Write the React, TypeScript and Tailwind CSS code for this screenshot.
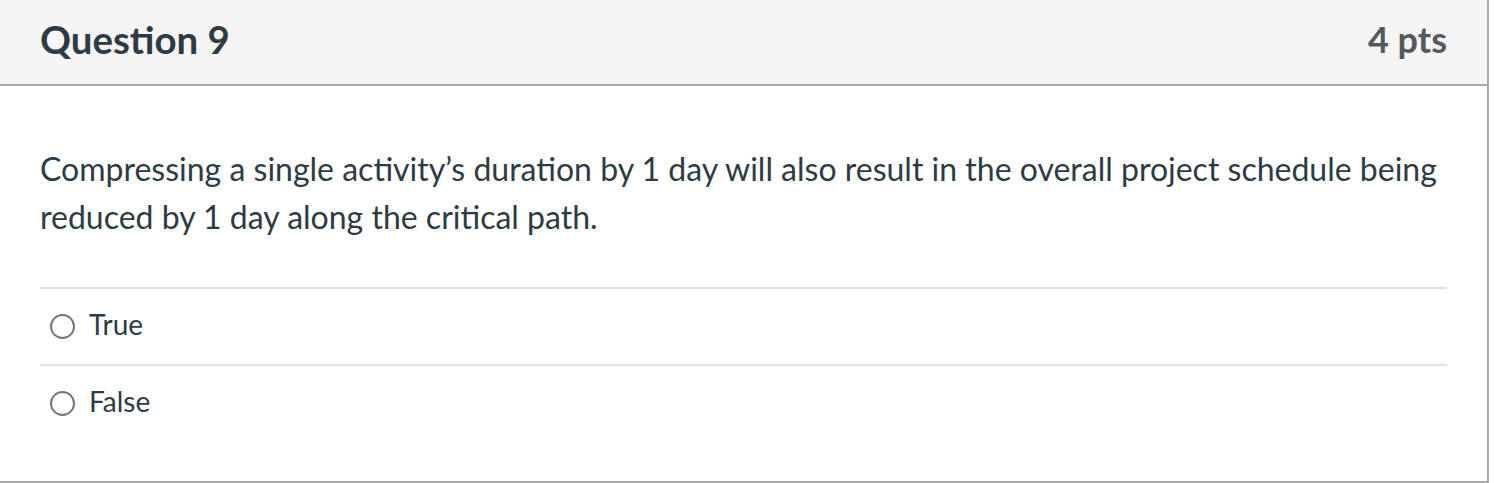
import React from 'react';

const answers = ['True', 'False'];

export default function App() {
  return (
    <div className="w-[1494px] h-[483px] bg-white" style={{ fontFamily: 'Lato, "Open Sans", sans-serif' }}>
      <div className="w-[1489px] border-r-2 border-b-2 border-[#a9a9a9] text-[#2d3b45]">
        {/* Header */}
        <div className="h-[86px] bg-[#f5f5f5] border-b-2 border-[#a9a9a9] px-[40px] flex items-center justify-between">
          <h2 className="text-[38.4px] font-bold leading-none -mt-[6px]">Question 9</h2>
          <span className="text-[36px] font-bold leading-none text-[#555a5e] -mt-[6px]">4 pts</span>
        </div>

        {/* Body */}
        <div className="px-[40px] pt-[59px] pb-[40px]">
          <p className="text-[32px] leading-[48px]">
            Compressing a single activity’s duration by 1 day will also result in the overall project schedule being
            reduced by 1 day along the critical path.
          </p>

          <div className="mt-[46px]">
            {answers.map((a) => (
              <div key={a} className="h-[77px] flex items-center gap-[14px] pl-[10px] border-t-2 border-[#e2e2e2]">
                <span className="w-[25px] h-[25px] rounded-full border-2 border-[#777]" />
                <span className="text-[28px] leading-none -mt-[5px]">{a}</span>
              </div>
            ))}
          </div>
        </div>
      </div>
    </div>
  );
}
